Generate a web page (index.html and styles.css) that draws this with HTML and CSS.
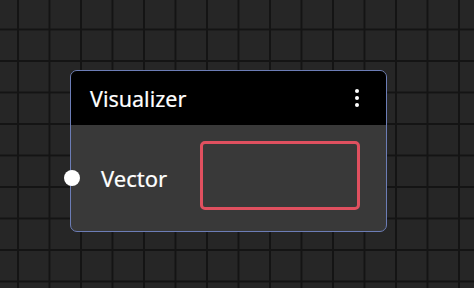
FILE: index.html
```html
<!DOCTYPE html>
<html>
<head>
<meta charset="utf-8">
<link rel="stylesheet" href="styles.css">
</head>
<body>
<div class="canvas">
  <div class="node">
    <div class="node-header">
      <span class="node-title">Visualizer</span>
      <span class="kebab"><i></i><i></i><i></i></span>
    </div>
    <div class="node-body">
      <span class="socket"></span>
      <span class="port-label">Vector</span>
      <div class="preview"></div>
    </div>
  </div>
</div>
</body>
</html>
```
FILE: styles.css
```css
html, body {
  margin: 0;
  padding: 0;
  width: 474px;
  height: 288px;
  overflow: hidden;
}
.canvas {
  position: relative;
  width: 474px;
  height: 288px;
  background-color: #262626;
  background-image:
    linear-gradient(to right, #141414 2px, transparent 2px),
    linear-gradient(to bottom, #141414 2px, transparent 2px);
  background-size: 31.5px 31.5px;
  background-position: 17px 28.5px;
  font-family: "Noto Sans", "Open Sans", sans-serif;
  color: #fff;
}
.node {
  position: absolute;
  left: 70px;
  top: 70px;
  width: 315px;
  height: 160px;
  border: 1px solid #6c7db6;
  border-radius: 7px;
  background: #393939;
  display: flex;
  flex-direction: column;
}
.node-header {
  height: 54px;
  background: #000;
  border-radius: 6px 6px 0 0;
  display: flex;
  align-items: center;
  justify-content: space-between;
  padding: 0 27px 0 19px;
}
.node-title {
  font-size: 21.5px;
  line-height: 1;
  margin-top: 1px;
  -webkit-text-stroke: 0.2px #fff;
}
.kebab {
  display: flex;
  flex-direction: column;
  gap: 3.3px;
}
.kebab i {
  display: block;
  width: 4px;
  height: 4px;
  border-radius: 50%;
  background: #fff;
}
.node-body {
  position: relative;
  flex: 1;
  display: flex;
  align-items: center;
  padding: 0 26px 0 30px;
}
.socket {
  position: absolute;
  left: -7px;
  top: 45px;
  width: 16px;
  height: 16px;
  border-radius: 50%;
  background: #fff;
}
.port-label {
  font-size: 22px;
  line-height: 1;
  margin-top: 0;
  -webkit-text-stroke: 0.2px #fff;
}
.preview {
  margin-left: auto;
  margin-top: -6px;
  width: 154px;
  height: 63px;
  border: 3px solid #e0505f;
  border-radius: 5px;
  background: #393939;
}
```
